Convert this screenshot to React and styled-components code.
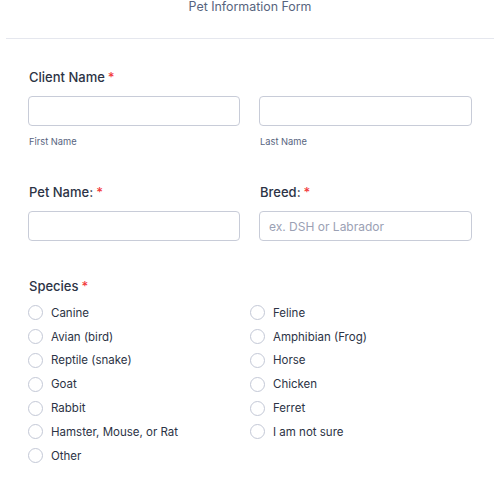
import styled, { createGlobalStyle } from "styled-components";

const GlobalStyle = createGlobalStyle`
  body {
    margin: 0;
    background: #ffffff;
    font-family: Inter, "Noto Sans", sans-serif;
  }
  * { box-sizing: border-box; }
`;

export const Page = styled.div`
  width: 500px;
  height: 484px;
  overflow: hidden;
  background: #fff;
`;

export const Header = styled.div`
  height: 39px;
  margin: 0 6px;
  padding-top: 1px;
  border-bottom: 1px solid #e5e7ee;
  text-align: center;
  color: #57647e;
  font-size: 12.4px;
  line-height: 12px;
`;

export const Form = styled.div`
  padding: 28px 28px 0 28px;
  display: flex;
  flex-direction: column;
`;

export const Section = styled.div`
  margin-bottom: ${(p) => p.$mb || 0}px;
`;

export const Label = styled.div`
  color: #2c3345;
  font-size: 13px;
  font-weight: 500;
  line-height: 20px;
  margin-left: 1px;
  span {
    color: #f23a3c;
    margin-left: 3px;
  }
`;

export const Row = styled.div`
  display: grid;
  grid-template-columns: 212px 213px;
  column-gap: 19px;
`;

export const Field = styled.div`
  display: flex;
  flex-direction: column;
`;

export const Input = styled.input`
  height: 30px;
  width: 100%;
  margin-top: 9px;
  border: 1px solid #c8ccd8;
  border-radius: 4px;
  padding: 0 9px;
  font-family: Inter, "Noto Sans", sans-serif;
  font-size: 12px;
  color: #2c3345;
  outline: none;
  &::placeholder {
    color: #9ba1b4;
  }
`;

export const SubLabel = styled.div`
  margin-top: 9px;
  margin-left: 1px;
  font-size: 9.3px;
  line-height: 14px;
  color: #57647e;
`;

export const RadioGrid = styled.div`
  display: grid;
  grid-template-columns: 222px 222px;
  grid-auto-flow: column;
  grid-template-rows: repeat(7, 23.8px);
  margin-top: 5px;
`;

export const RadioItem = styled.label`
  display: flex;
  align-items: center;
  gap: 8px;
  font-size: 11.5px;
  color: #2c3345;
  height: 23.8px;
`;

export const Circle = styled.span`
  width: 15px;
  height: 15px;
  border-radius: 50%;
  border: 1px solid #c3c8d6;
  background: #fff;
  flex-shrink: 0;
`;

const left = [
  "Canine",
  "Avian (bird)",
  "Reptile (snake)",
  "Goat",
  "Rabbit",
  "Hamster, Mouse, or Rat",
  "Other",
];
const right = [
  "Feline",
  "Amphibian (Frog)",
  "Horse",
  "Chicken",
  "Ferret",
  "I am not sure",
];

const Radio = ({ text }) => (
  <RadioItem>
    <Circle />
    {text}
  </RadioItem>
);

const App = () => {
  return (
    <Page>
      <GlobalStyle />
      <Header>Pet Information Form</Header>
      <Form>
        <Section $mb={33}>
          <Label>
            Client Name<span>*</span>
          </Label>
          <Row>
            <Field>
              <Input />
              <SubLabel>First Name</SubLabel>
            </Field>
            <Field>
              <Input />
              <SubLabel>Last Name</SubLabel>
            </Field>
          </Row>
        </Section>
        <Section $mb={35}>
          <Row>
            <Field>
              <Label>
                Pet Name:<span>*</span>
              </Label>
              <Input />
            </Field>
            <Field>
              <Label>
                Breed:<span>*</span>
              </Label>
              <Input placeholder="ex. DSH or Labrador" />
            </Field>
          </Row>
        </Section>
        <Section>
          <Label>
            Species<span>*</span>
          </Label>
          <RadioGrid>
            {left.map((t) => (
              <Radio key={t} text={t} />
            ))}
            {right.map((t) => (
              <Radio key={t} text={t} />
            ))}
          </RadioGrid>
        </Section>
      </Form>
    </Page>
  );
};

export default App;
